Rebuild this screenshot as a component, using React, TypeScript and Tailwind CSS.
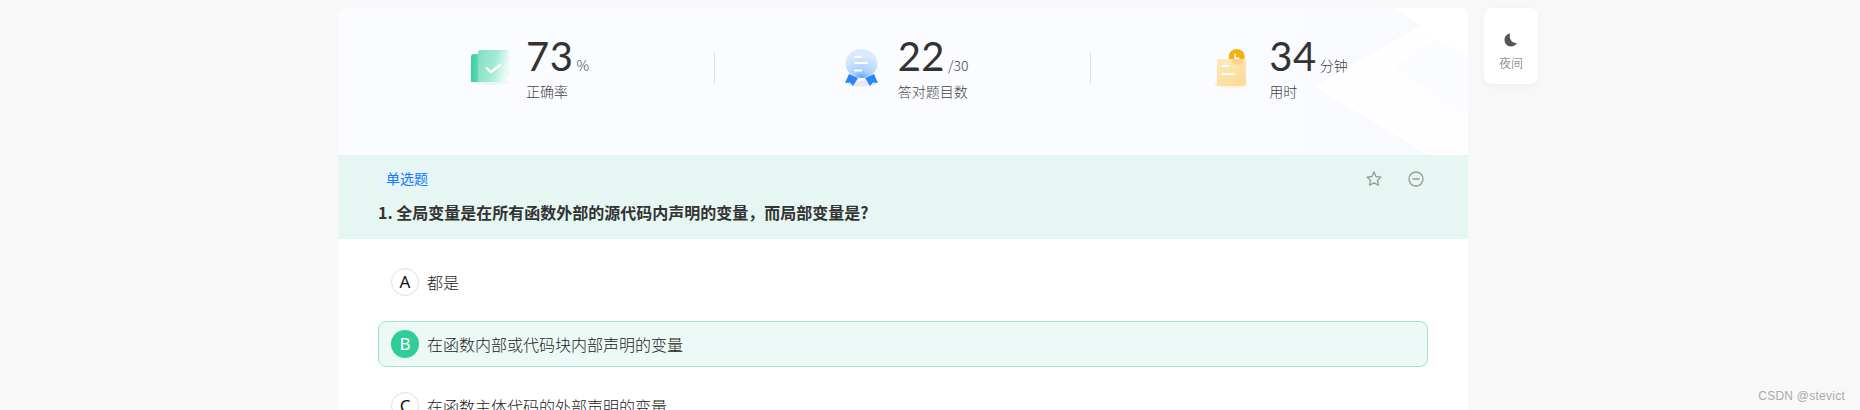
import React from "react";

const cjk = '"Noto Sans CJK SC", "Noto Sans", sans-serif';

function CheckIcon() {
  return (
    <svg width="38" height="36" viewBox="0 0 38 36" className="shrink-0">
      <defs>
        <linearGradient id="c1" x1="0" y1="0" x2="1" y2="0">
          <stop offset="0" stopColor="#38cf9f" />
          <stop offset="1" stopColor="#6fdcb9" />
        </linearGradient>
        <linearGradient id="c2" x1="0" y1="0" x2="1" y2="0.25">
          <stop offset="0" stopColor="#7ee0c1" />
          <stop offset="0.6" stopColor="#a4ead5" />
          <stop offset="1" stopColor="#eafaf5" />
        </linearGradient>
      </defs>
      <ellipse cx="19" cy="33" rx="18" ry="3" fill="#eef6f3" />
      <path d="M3 5h7v28H0V8a3 3 0 0 1 3-3z" fill="url(#c1)" />
      <path d="M9 1h27a2 2 0 0 1 2 2v20c0 6-4 10-10 10H7V3a2 2 0 0 1 2-2z" fill="url(#c2)" />
      <path d="M15 18.5l5 4.5 10-7.5" fill="none" stroke="#fff" strokeWidth="2.2" />
    </svg>
  );
}

function MedalIcon() {
  return (
    <svg width="33" height="38" viewBox="0 0 33 38" className="shrink-0">
      <defs>
        <radialGradient id="m1" cx="0.5" cy="1" r="0.75">
          <stop offset="0" stopColor="#5aa3fb" />
          <stop offset="0.35" stopColor="#a9cffd" />
          <stop offset="1" stopColor="#d9e9fe" />
        </radialGradient>
      </defs>
      <ellipse cx="16.5" cy="34.5" rx="15" ry="3" fill="#e6e9f8" />
      <path d="M4 25L0 34l5-.5L8 37l5-8z" fill="#2a86f8" />
      <path d="M29 25l4 9-5-.5L25 37l-5-8z" fill="#2a86f8" />
      <ellipse cx="16.5" cy="14.5" rx="16" ry="14.5" fill="url(#m1)" />
      <rect x="9" y="7" width="8" height="2" rx="1" fill="#fff" />
      <rect x="9" y="13" width="14" height="2" rx="1" fill="#fff" />
      <rect x="9" y="20.5" width="8" height="2" rx="1" fill="#fff" />
    </svg>
  );
}

function ClockIcon() {
  return (
    <svg width="35" height="39" viewBox="0 0 35 39" className="shrink-0">
      <defs>
        <linearGradient id="n1" x1="0" y1="0" x2="0.6" y2="1">
          <stop offset="0" stopColor="#feebbd" />
          <stop offset="1" stopColor="#fddc97" />
        </linearGradient>
      </defs>
      <ellipse cx="17.5" cy="35.5" rx="17.5" ry="3.5" fill="#f8f3e6" />
      <circle cx="22.7" cy="8" r="8" fill="#f6b012" />
      <path d="M21 4.5v4.8h4.5" fill="none" stroke="#fff" strokeWidth="1.4" />
      <path d="M3 10h29v24a3 3 0 0 1-3 3H5a2 2 0 0 1-2-2z" fill="url(#n1)" />
      <path d="M18 10h11v1a5.5 5 0 0 1-11 0z" fill="#f9c862" opacity="0.55" />
      <rect x="8" y="16" width="7" height="2" rx="1" fill="#fff" />
      <rect x="8" y="24" width="13" height="2" rx="1" fill="#fff" />
    </svg>
  );
}

function Stat({ icon, num, unit, label, pad, gap, border }: { icon: React.ReactNode; num: string; unit: string; label: string; pad: string; gap: string; border: boolean }) {
  return (
    <div className={`relative w-1/3 shrink-0 h-full ${pad}`}>
      <div className={`flex items-start ${gap} pt-[26px]`}>
        <div className="mt-[15px]">{icon}</div>
        <div>
          <div className="flex items-baseline h-[46px]">
            <span className="text-[40px] leading-[45px] text-[#333] tracking-[0.5px]" style={{ fontFamily: "Lato, sans-serif" }}>{num}</span>
            <span className="text-sm font-light text-[#444] ml-[3px]">{unit}</span>
          </div>
          <div className="text-sm leading-5 font-light text-[#444] mt-[1px]">{label}</div>
        </div>
      </div>
      {border && <div className="absolute right-0 top-[44px] h-8 w-px bg-[#dfe2e8]" />}
    </div>
  );
}

function Option({ letter, text, active }: { letter: string; text: string; active?: boolean }) {
  return (
    <div className={`flex items-center h-[46px] mb-[16px] rounded-lg px-3 gap-2 border ${active ? "bg-[#edf9f6] border-[#9fe3cc]" : "border-transparent"}`}>
      <span className={`flex items-center justify-center w-7 h-7 rounded-full text-[17px] ${active ? "bg-[#32cc99] text-white" : "border border-[#e0e0e0] text-[#111] bg-white"}`} style={{ fontFamily: '"Noto Sans", sans-serif' }}>{letter}</span>
      <span className="text-base font-light text-[#222]">{text}</span>
    </div>
  );
}

export default function App() {
  return (
    <div className="relative h-[410px] overflow-hidden bg-[#f8f8f8] flex items-start gap-4 pl-[338px] pt-2" style={{ fontFamily: cjk }}>
      <div className="w-[1130px] shrink-0 bg-white rounded-t-lg overflow-hidden">
        <div className="relative h-[147px] bg-[#fbfcff] flex">
          <svg className="absolute right-0 top-0" width="230" height="147" viewBox="0 0 230 147">
            <defs>
              <linearGradient id="w" x1="0" y1="0" x2="1" y2="1">
                <stop offset="0" stopColor="#ffffff" />
                <stop offset="1" stopColor="#fdfdff" />
              </linearGradient>
              <linearGradient id="d" x1="0" y1="0" x2="1" y2="0">
                <stop offset="0" stopColor="#fbfcff" />
                <stop offset="1" stopColor="#f8f9fe" />
              </linearGradient>
            </defs>
            <rect width="230" height="147" fill="url(#d)" />
            <path d="M154 0H230V47z" fill="#fff" />
            <path d="M81 79L182 20L230 47V147H194z" fill="url(#w)" stroke="#ffffff" strokeWidth="4" strokeLinejoin="round" />
            <path d="M157 59L200 33L230 50V105z" fill="#fbfcff" stroke="#fbfcff" strokeWidth="3" strokeLinejoin="round" />
          </svg>
          <Stat icon={<CheckIcon />} num="73" unit="%" label="正确率" pad="pl-[133px]" gap="gap-[17px]" border />
          <Stat icon={<MedalIcon />} num="22" unit="/30" label="答对题目数" pad="pl-[130px]" gap="gap-5" border />
          <Stat icon={<ClockIcon />} num="34" unit="分钟" label="用时" pad="pl-[123px]" gap="gap-5" border={false} />
        </div>
        <div className="h-[84px] bg-[#e6f6f2] pl-10 pr-[44px] pt-3">
          <div className="flex items-center justify-between">
            <span className="inline-flex items-center h-[22px] rounded px-2 bg-[#e5f5f8] text-sm text-[#1677ff]">单选题</span>
            <div className="flex items-center gap-[26px] text-[#999] mt-[1px]">
              <svg width="16" height="16" viewBox="0 0 16 16" fill="none" stroke="currentColor" strokeWidth="1.3" strokeLinejoin="round"><path d="M8 1l2 4.5 5 .6-3.6 3.3 1 4.9L8 11.9l-4.4 2.4 1-4.9L1 6.1l5-.6z" /></svg>
              <svg width="16" height="16" viewBox="0 0 16 16" fill="none" stroke="currentColor" strokeWidth="1.3"><circle cx="8" cy="8" r="7" /><path d="M4.5 8h7" /></svg>
            </div>
          </div>
          <div className="mt-[11px] text-base leading-6 font-bold text-[#333]">1. 全局变量是在所有函数外部的源代码内声明的变量，而局部变量是?</div>
        </div>
        <div className="pt-[20px] px-10">
          <Option letter="A" text="都是" />
          <Option letter="B" text="在函数内部或代码块内部声明的变量" active />
          <Option letter="C" text="在函数主体代码的外部声明的变量" />
        </div>
      </div>
      <div className="w-[54px] h-[76px] shrink-0 bg-white rounded-lg shadow-[0_2px_8px_rgba(0,0,0,0.04)] flex flex-col items-center pt-[25px]">
        <svg width="14" height="14" viewBox="0 0 14 14"><path d="M6 0.5C2.6 1 0.5 3.7 0.5 7c0 3.6 2.9 6.5 6.5 6.5 2.6 0 4.8-1.5 5.8-3.6C8.6 10.6 4.6 6.5 6 0.5z" fill="#555" /></svg>
        <span className="text-xs font-light text-[#666] mt-[8px] leading-4">夜间</span>
      </div>
      <div className="absolute right-[15px] bottom-[6px] text-xs tracking-[0.25px] text-[#aaa]" style={{ fontFamily: '"Liberation Sans", sans-serif' }}>CSDN @stevict</div>
    </div>
  );
}
